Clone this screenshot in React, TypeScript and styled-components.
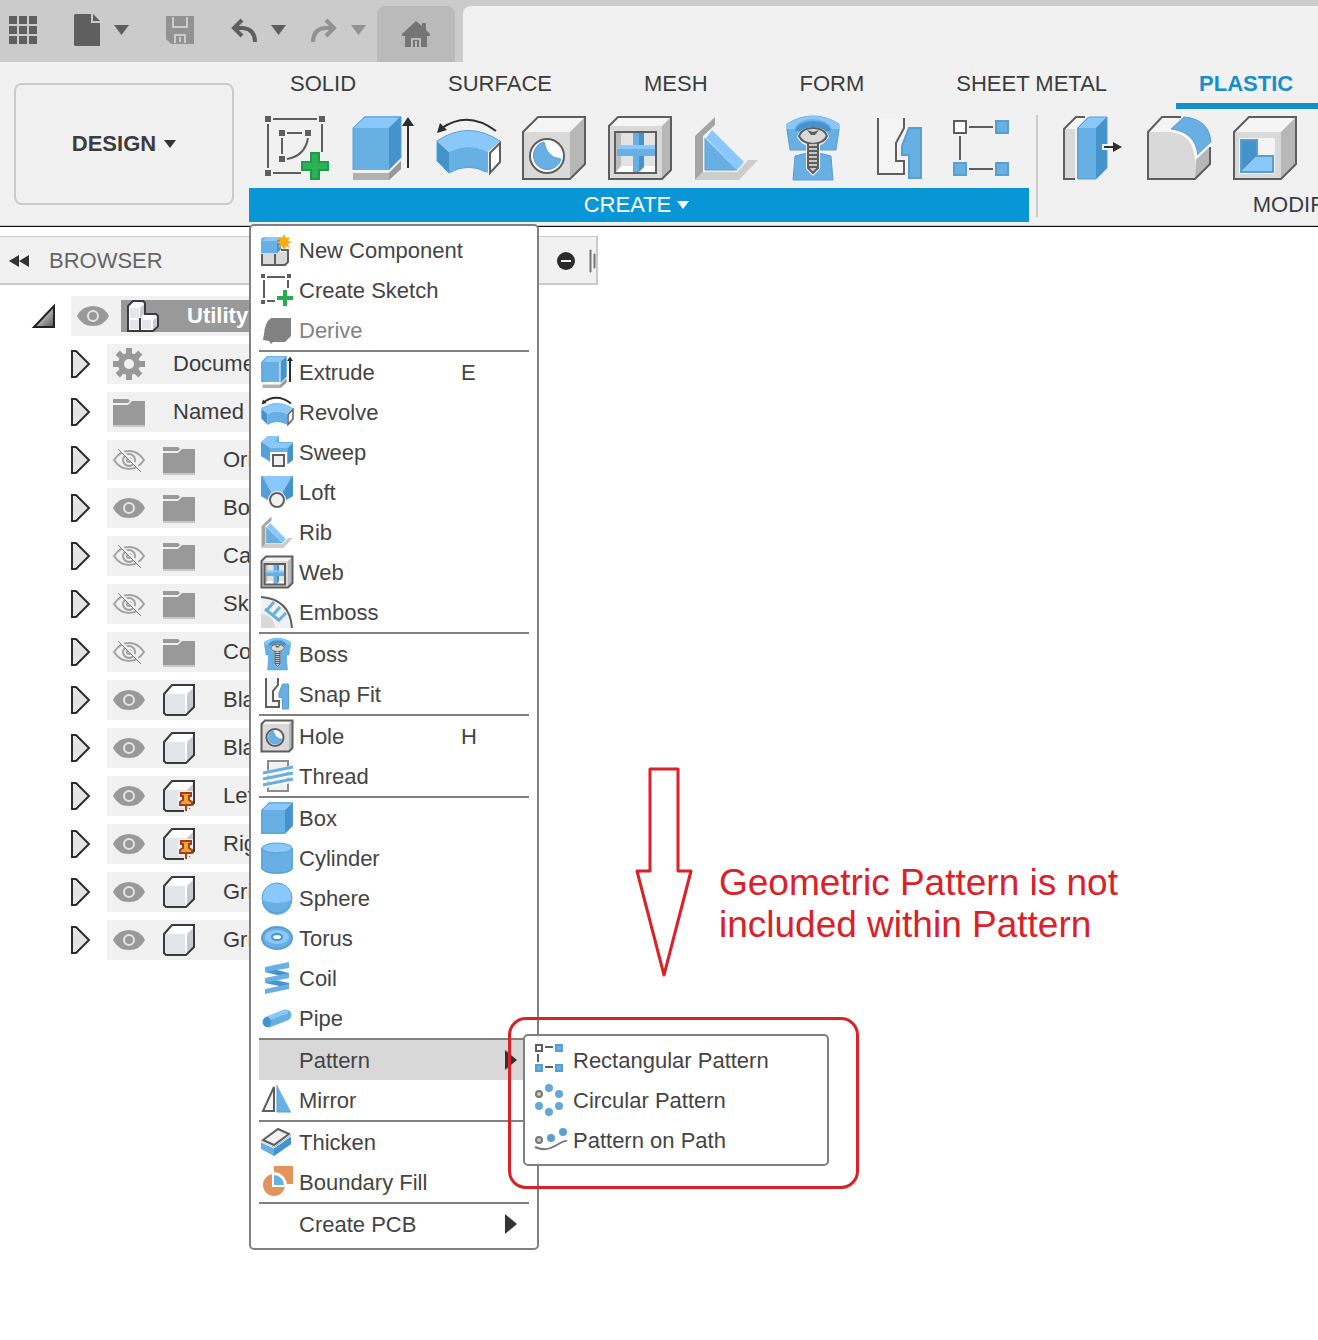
import React from "react";
import styled, { createGlobalStyle, css } from "styled-components";

/* ---------- palette ---------- */
const c = {
  face: "#68afe3",
  light: "#8ac8fb",
  dark: "#4593cb",
  edge: "#589fd1",
  line: "#5e5e5e",
  grey: "#d9d9d9",
  greyDark: "#b7b7b7",
  pale: "#f5f5f5",
  text: "#3c3c3c",
  accent: "#0896d7",
  note: "#dc2027",
};

const GlobalStyle = createGlobalStyle`
  *, *::before, *::after { box-sizing: border-box; }
  body {
    margin: 0;
    background: #fff;
    color: ${c.text};
    font: 22px/26px "Liberation Sans", Arial, sans-serif;
  }
  button {
    font: inherit;
    color: inherit;
    background: none;
    border: 0;
    padding: 0;
    margin: 0;
    cursor: pointer;
  }
`;

/* ---------- svg helpers ---------- */
const Svg = styled.svg<{ $w: number; $h?: number }>`
  display: block;
  flex: none;
  width: ${(p) => p.$w}px;
  height: ${(p) => p.$h ?? p.$w}px;
  overflow: visible;
`;

type IconProps = { small?: boolean };

/* Drawn on a 64 grid; shown at 64px in the ribbon and at 32px in menus. */
const Icon64 = ({ small, children }: React.PropsWithChildren<IconProps>) => (
  <Svg $w={small ? 32 : 64} viewBox="0 0 64 64" aria-hidden="true">
    {children}
  </Svg>
);
const Icon32 = ({ children }: React.PropsWithChildren) => (
  <Svg $w={32} viewBox="0 0 32 32" aria-hidden="true">
    {children}
  </Svg>
);

const Caret = ({ w = 12, h = 8, fill = "#333" }: { w?: number; h?: number; fill?: string }) => (
  <Svg $w={w} $h={h} viewBox="0 0 12 8" preserveAspectRatio="none" aria-hidden="true">
    <path d="M0 0H12L6 8Z" fill={fill} />
  </Svg>
);

/* ---------- ribbon icons ---------- */
const SketchIcon = () => (
  <Icon64>
    <g fill={c.line}>
      <path d="M1 0h6v6H1zM55 0h6v6h-6zM1 54h6v6H1zM15 14h6v6h-6zM41 14h6v6h-6zM15 40h6v6h-6z" />
    </g>
    <path
      d="M9 3H53M4 8V52M58 8V36M9 57H37M23 17H38M18 22V38M44 22Q41 40 23 43"
      stroke={c.line}
      strokeWidth="2"
      fill="none"
    />
    <path d="M47 37h8v9h9v8h-9v9h-8v-9h-9v-8h9z" fill="#2bb257" stroke="#1f9a48" strokeWidth="2" />
  </Icon64>
);

const ExtrudeIcon = ({ small }: IconProps) => (
  <Icon64 small={small}>
    <path d="M3 57H39L51 45V53L39 64H3Z" fill="#b1b1b1" />
    <path d="M39 57L51 45V53L39 64Z" fill="#989898" />
    <path d={small ? "M0 12L12 0H47L37 12V52H0Z" : "M3 12L15 0H51L40 12V54H3Z"} fill={c.face} />
    <path d="M3 12L15 0H51L39 12Z" fill={c.light} />
    <path d="M39 12L51 0V42L39 54Z" fill={c.dark} />
    <path d="M3 54V12L15 1H51V42" stroke={c.edge} fill="none" />
    <path d="M58 8V52" stroke="#2e2e2e" strokeWidth={small ? 4 : 2} />
    <path d="M58 1L64 10H52Z" fill="#2e2e2e" />
  </Icon64>
);

const RevolveIcon = ({ small }: IconProps) => (
  <Icon64 small={small}>
    <path d="M60 15Q32 -6 6 12" stroke="#2e2e2e" strokeWidth={small ? 4 : 2} fill="none" />
    <path d="M1 17L4 7L11 14Z" fill="#2e2e2e" />
    <path d="M1 25L13 36V57L1 45Z" fill={c.dark} />
    <path d="M1 25Q32 4 64 25L52 36Q32 26 13 36Z" fill={c.light} />
    <path d="M13 36Q32 26 52 36V57Q32 46 13 57Z" fill={c.face} />
    <path d="M1 25V45L13 57Q32 46 50 56M1 25Q32 4 64 25" stroke={c.edge} fill="none" />
    <path d="M54 37L64 27V46L54 57Z" fill="#fff" stroke={c.line} strokeWidth={small ? 3 : 2} />
  </Icon64>
);

const GreyBox = ({ d, w }: { d: number; w: number }) => (
  <>
    <path d={`M1 ${d}L${d} 1H63L${64 - d} ${d}Z`} fill={c.pale} />
    <path d={`M${64 - d} ${d}L63 1V${64 - d}L${64 - d} 63Z`} fill={c.greyDark} />
    <path d={`M1 ${d}H${64 - d}V63H1Z`} fill={c.grey} />
    <path
      d={`M1 ${d}L${d} 1H63V${64 - d}L${64 - d} 63H1Z`}
      fill="none"
      stroke={c.line}
      strokeWidth={w}
    />
  </>
);

const HoleIcon = ({ small }: IconProps) => (
  <Icon64 small={small}>
    <GreyBox d={small ? 8 : 16} w={small ? 4 : 2} />
    <g transform={small ? "translate(3 -5)" : undefined}>
      <circle cx="25" cy="40" r="17" fill="#fff" stroke={c.line} strokeWidth={small ? 4 : 2} />
      <path
        d="M22 26A14 14 0 1 0 39 43Q25 42 22 26Z"
        fill={c.face}
        stroke={c.edge}
        strokeWidth="1"
      />
    </g>
  </Icon64>
);

const WebIcon = ({ small }: IconProps) => (
  <Icon64 small={small}>
    <GreyBox d={10} w={small ? 4 : 2} />
    <path d="M7 16H48V57H7Z" fill="#e3e3e3" />
    <path d="M7 16H13V51L7 57Z" fill="#bcbcbc" />
    <path d="M7 57L13 50H48V57Z" fill="#fff" />
    <path d="M25 16H31V56H25Z" fill={c.face} />
    <path d="M31 16H36V51L31 56Z" fill={c.dark} />
    <path d="M9 33L13 29H48V33Z" fill={c.light} />
    <path d="M9 33H48V40H9Z" fill={c.face} />
    <path d="M7 16H48V57H7Z" fill="none" stroke={c.line} strokeWidth={small ? 4 : 2} />
  </Icon64>
);

const RibIcon = ({ small }: IconProps) => (
  <Icon64 small={small}>
    <path d="M1 20L21 1V9L9 20V56L1 64Z" fill="#a5a5a5" />
    <path d="M1 64L9 56H43L54 44H64L45 64Z" fill="#cdcdcd" />
    <path d="M12 22L18 14L50 46L43 54Z" fill={c.light} />
    <path d="M11 22L43 54H11Z" fill={c.face} />
    <path d="M11 22V54H43" fill="none" stroke={c.edge} />
  </Icon64>
);

const BossIcon = ({ small }: IconProps) => (
  <Icon64 small={small}>
    <path d="M7 8Q33 -8 59 8V14L56 34H10L7 14Z" fill={c.face} stroke={c.edge} />
    <path d="M7 8Q33 -8 59 8V13H52Q47 3 33 3Q19 3 14 13H7Z" fill={c.light} />
    <path d="M15 15Q17 6 33 5Q49 6 51 15Z" fill={c.dark} />
    <path d="M15 40Q33 34 51 40L53 64H13Z" fill={c.face} stroke={c.edge} />
    {small && <path d="M14 32H52V42H14Z" fill={c.face} />}
    <path
      d="M17 21Q20 11 33 11Q46 11 49 21Q44 28 40 29V53L33 60L26 53V29Q21 28 17 21Z"
      fill={small ? c.light : "#f3f3f3"}
    />
    <path
      d="M19 20Q22 12 33 12Q44 12 47 20Q44 27 33 28Q22 27 19 20Z"
      fill={c.grey}
      stroke={c.line}
      strokeWidth="2"
    />
    <path d="M27 14L33 16L39 14L35 19H31Z" fill={c.line} />
    <path d="M28 28H38V52L33 57L28 52Z" fill="#c5c5c5" />
    <path
      d="M28 31H38M28 35H38M28 39H38M28 43H38M28 47H38M28 51H38"
      stroke={c.line}
      strokeWidth="2"
    />
    <path d="M28 28V52L33 57L38 52V28" fill="none" stroke={c.line} strokeWidth="2" />
  </Icon64>
);

const SnapIcon = ({ small }: IconProps) => (
  <Icon64 small={small}>
    <path
      d={
        small
          ? "M10 0V58H36V46H24V26L34 14V0"
          : "M12 2V58H38V45H30V27L38 12V2"
      }
      fill={c.pale}
      stroke={c.line}
      strokeWidth={small ? 4 : 2}
    />
    <path d="M43 12H55V62H43V39H36V30Z" fill={c.face} stroke={c.edge} strokeWidth="2" />
  </Icon64>
);

const RectPatternIcon = () => (
  <Icon64>
    <path d="M2 5H14V17H2Z" fill="#fff" stroke={c.line} strokeWidth="2" />
    <path
      d="M44 5H56V17H44ZM2 47H14V59H2ZM44 47H56V59H44Z"
      fill={c.face}
      stroke={c.edge}
      strokeWidth="2"
    />
    <path d="M17 11H41M17 53H41M8 20V44" stroke={c.line} strokeWidth="2" />
  </Icon64>
);

const PressPullIcon = () => (
  <Icon64>
    <path d="M2 12L14 1H25L14 12V63H2Z" fill={c.pale} />
    <path d="M3 13H14V62H3Z" fill={c.grey} />
    <path d="M14 63H3V13L15 1H24" fill="none" stroke={c.line} strokeWidth="2" />
    <path d="M16 12L27 1H46V52L35 63H16Z" fill={c.face} />
    <path d="M16 12L27 1H46L35 12Z" fill={c.light} />
    <path d="M35 12L46 1V52L35 63Z" fill={c.dark} />
    <path d="M17 12L28 1H46V52L35 63H17Z" fill="none" stroke={c.edge} strokeWidth="1" />
    <path d="M41 28H52V34H41Z" fill="#f1f1f1" />
    <path d="M43 31H54" stroke="#2e2e2e" strokeWidth="2" />
    <path d="M52 26L61 31L52 36Z" fill="#2e2e2e" />
  </Icon64>
);

const FilletIcon = () => (
  <Icon64>
    <path d="M1 16L15 1H36L24 15Z" fill={c.pale} />
    <path d="M49 43L63 30V48L48 63Z" fill={c.greyDark} />
    <path d="M1 16H24Q46 18 48 43V63H1Z" fill={c.grey} />
    <path d="M34 1H15L1 16V63H48L63 48V31" fill="none" stroke={c.line} strokeWidth="2" />
    <path d="M24 13L37 1Q62 3 64 26L51 40Q49 16 24 13Z" fill={c.face} stroke={c.edge} />
    <path d="M22 15Q47 16 49 42L64 28" fill="none" stroke="#fff" strokeWidth="2" />
  </Icon64>
);

const ShellIcon = () => (
  <Icon64>
    <GreyBox d={16} w={2} />
    <path d="M6 22H42V58H6Z" fill="#f4f4f4" />
    <path d="M8 24H24V40L8 56Z" fill={c.dark} />
    <path d="M24 40H40V56H8Z" fill={c.light} />
    <path d="M8 24H24V40H40V56H8Z" fill="none" stroke={c.edge} strokeWidth="2" />
  </Icon64>
);

/* ---------- menu icons ---------- */
const NewComponentIcon = () => (
  <Icon32>
    <path d="M1 18H14V31H1ZM14 18H24L27 15V28L24 31H14Z" fill={c.grey} />
    <path d="M1 20V31H24L27 28V16H20M14 20V31" fill="none" stroke={c.line} strokeWidth="2" />
    <path d="M0 6Q0 3 5 3H20V15L16 19H0Z" fill={c.face} />
    <path d="M1 7L5 3H20L16 7Z" fill={c.light} />
    <path d="M16 7L20 3V15L16 19Z" fill={c.dark} />
    <path
      d="M23 0L25 4L29 3L27 7L31 8L27 10L29 14L25 12L23 16L21 12L17 14L19 10L15 8L19 7L17 3L21 4Z"
      fill="#fbab12"
    />
  </Icon32>
);
const SmallSketchIcon = () => (
  <Icon32>
    <path d="M0 0h4v4H0zM26 0h4v4h-4zM0 26h4v4H0z" fill={c.line} />
    <path d="M6 3H24M3 6V24M27 6V14M6 27H14" stroke={c.line} strokeWidth="2" />
    <path d="M22 16h4v6h6v4h-6v6h-4v-6h-6v-4h6z" fill="#27ad50" />
  </Icon32>
);
const DeriveIcon = () => (
  <Icon32>
    <path d="M10 4H30V22L24 28H12L10 30L8 27L2 26L3 20Q4 8 10 4Z" fill="#828282" />
  </Icon32>
);
const SweepIcon = () => (
  <Icon32>
    <path d="M0 6L7 0H18V6H32V24L26 28H12L0 20Z" fill={c.face} />
    <path d="M0 6L7 0H18L14 5L18 7H32L27 12H9Z" fill={c.light} />
    <path d="M27 12L32 7V24L27 28Z" fill={c.dark} />
    <path d="M0 6L9 12V24L0 20Z" fill="#56a1d8" />
    <path d="M9 16H26V32H9Z" fill="#fff" />
    <path d="M12 19H23V30H12Z" fill="#f1f1f1" stroke={c.line} strokeWidth="2" />
  </Icon32>
);
const LoftIcon = () => (
  <Icon32>
    <path d="M0 0H32V20L25 24L16 14L7 24L0 20Z" fill={c.face} />
    <path d="M2 0H30L22 17H10Z" fill={c.light} />
    <path d="M32 0V20L25 24L22 16Z" fill={c.dark} />
    <path d="M0 0V20L7 24L10 16Z" fill="#549fd6" />
    <circle cx="16" cy="24" r="9" fill="#fff" />
    <circle cx="16" cy="24" r="7" fill="#f1f1f1" stroke={c.line} strokeWidth="2" />
  </Icon32>
);
const EmbossIcon = () => (
  <Icon32>
    <path d="M0 1Q29 3 31 32H0Z" fill="#f1f1f1" />
    <path d="M0 18Q13 19 14 32H0Z" fill={c.grey} />
    <path d="M0 1Q29 3 31 32" fill="none" stroke={c.line} strokeWidth="2" />
    <path d="M4 13L19 25M6 14L13 6M12 19L19 11M18 24L25 17" stroke={c.face} strokeWidth="3" />
  </Icon32>
);
const ThreadIcon = () => (
  <Icon32>
    <path d="M7 1H27V31H7Z" fill="#f1f1f1" stroke="#8b8b8b" strokeWidth="2" />
    <path
      d="M2 14L32 8M2 20L32 14M2 26L32 20"
      stroke="#fff"
      strokeWidth="5"
    />
    <path d="M2 13L32 7M2 19L32 13M2 25L32 19" stroke={c.face} strokeWidth="3" />
  </Icon32>
);
const BoxIcon = () => (
  <Icon32>
    <path d="M0 8L8 0H32L24 8Z" fill={c.light} />
    <path d="M24 8L32 0V24L24 32Z" fill={c.dark} />
    <path d="M0 8H24V32H0Z" fill={c.face} />
    <path d="M1 8L8 1H31V24L24 31H1Z" fill="none" stroke={c.edge} />
  </Icon32>
);
const CylinderIcon = () => (
  <Icon32>
    <path d="M0 6V27Q4 32 16 32Q28 32 32 27V6Z" fill={c.face} />
    <ellipse cx="16" cy="6" rx="15" ry="5" fill={c.light} stroke={c.edge} />
    <path d="M1 6V27Q5 31 16 31Q27 31 31 27V6" fill="none" stroke={c.edge} />
  </Icon32>
);
const SphereIcon = () => (
  <Icon32>
    <circle cx="16" cy="16" r="15" fill={c.light} />
    <path d="M1 18A15 15 0 0 0 31 18Q16 24 1 18Z" fill={c.face} />
    <circle cx="16" cy="16" r="15" fill="none" stroke={c.edge} />
  </Icon32>
);
const TorusIcon = () => (
  <Icon32>
    <ellipse cx="16" cy="16" rx="15" ry="11" fill={c.face} stroke={c.edge} strokeWidth="2" />
    <ellipse cx="16" cy="15" rx="12" ry="7" fill={c.light} />
    <ellipse cx="16" cy="15" rx="5" ry="3" fill="#fff" stroke={c.dark} strokeWidth="2" />
  </Icon32>
);
const CoilIcon = () => (
  <Icon32>
    <path d="M4 5L28 11V16L4 10ZM4 16L28 21V26L4 21Z" fill={c.dark} />
    <path d="M4 5L28 0V6L4 10ZM4 16L28 11V16L4 21ZM4 27L28 22V27L4 32Z" fill={c.face} />
  </Icon32>
);
const PipeIcon = () => (
  <Icon32>
    <path d="M7 20L25 13" stroke={c.face} strokeWidth="11" strokeLinecap="round" />
    <path d="M8 16L25 10" stroke={c.light} strokeWidth="4" strokeLinecap="round" />
    <ellipse cx="6" cy="20" rx="4" ry="5" fill={c.dark} />
  </Icon32>
);
const MirrorIcon = () => (
  <Icon32>
    <path d="M2 27L13 3V27Z" fill={c.pale} stroke={c.line} strokeWidth="2" />
    <path d="M16 1L30 28H16Z" fill={c.face} />
    <path d="M16 1V28H30" fill="none" stroke={c.edge} />
  </Icon32>
);
const ThickenIcon = () => (
  <Icon32>
    <path d="M0 15L13 21L30 9V18L13 30L0 23Z" fill={c.face} />
    <path d="M13 21L30 9V18L13 30Z" fill={c.dark} />
    <path d="M2 14L17 3L28 8L13 19Z" fill="#f1f1f1" stroke={c.line} strokeWidth="2" />
    <path d="M0 16L13 22L30 10" fill="none" stroke="#fff" strokeWidth="1" />
  </Icon32>
);
const BoundaryIcon = () => (
  <Icon32>
    <path d="M13 0H32V18H13Z" fill="#e3935c" />
    <circle cx="13" cy="19" r="11" fill="#e3935c" />
    <path d="M11 6A14 14 0 0 1 26 21H11Z" fill="#fff" />
    <path d="M13 9A10 10 0 0 1 23 19H13Z" fill={c.face} />
  </Icon32>
);
const SmallRectIcon = () => (
  <Icon32>
    <path d="M1 1H7V7H1Z" fill="#fff" stroke={c.line} strokeWidth="2" />
    <path d="M21 1H27V7H21ZM1 21H7V27H1ZM21 21H27V27H21Z" fill={c.face} stroke={c.edge} strokeWidth="2" />
    <path d="M10 3H18M10 23H18M3 10V18" stroke={c.line} strokeWidth="2" />
  </Icon32>
);
const CircularIcon = () => (
  <Icon32>
    <circle cx="4" cy="10" r="3" fill="#c9c9c9" stroke="#777" strokeWidth="2" />
    <g fill="#64a8d8">
      <circle cx="14" cy="4" r="4" />
      <circle cx="24" cy="10" r="4" />
      <circle cx="24" cy="22" r="4" />
      <circle cx="14" cy="28" r="4" />
      <circle cx="4" cy="22" r="4" />
    </g>
  </Icon32>
);
const PathIcon = () => (
  <Icon32>
    <circle cx="4" cy="16" r="3" fill="#c9c9c9" stroke="#777" strokeWidth="2" />
    <circle cx="16" cy="14" r="4" fill="#5b9fd2" />
    <circle cx="28" cy="8" r="4" fill="#5b9fd2" />
    <path d="M0 23Q10 28 20 22T32 17" fill="none" stroke="#777" strokeWidth="2" />
  </Icon32>
);

/* ---------- browser tree icons ---------- */
const EyeIcon = () => (
  <Icon32>
    <path d="M0 16Q5 6 16 6Q27 6 32 16Q27 26 16 26Q5 26 0 16Z" fill="#999" />
    <circle cx="16" cy="16" r="5" fill="#999" stroke="#e4e4e4" strokeWidth="2" />
  </Icon32>
);
const EyeOffIcon = () => (
  <Icon32>
    <g fill="none" stroke="#a3a3a3" strokeWidth="2">
      <path d="M1 16Q7 7 16 7Q25 7 31 16Q25 25 16 25Q7 25 1 16Z" />
      <circle cx="16" cy="16" r="6" />
      <circle cx="16" cy="16" r="2" />
    </g>
    <path d="M6 4L29 27" stroke="#f1f1f1" strokeWidth="2" />
    <path d="M5 5L28 28" stroke="#888" strokeWidth="1" />
  </Icon32>
);
const GearIcon = () => (
  <Icon32>
    {[0, 45, 90, 135].map((a) => (
      <path key={a} d="M13 0H19V32H13Z" fill="#999" transform={`rotate(${a} 16 16)`} />
    ))}
    <circle cx="16" cy="16" r="11" fill="#999" />
    <circle cx="16" cy="16" r="5" fill="#f1f1f1" />
  </Icon32>
);
const FolderIcon = () => (
  <Icon32>
    <path d="M0 3H15L17 5L15 7H0Z" fill="#999" />
    <path d="M0 9H15L19 5H32V29H0Z" fill="#999" />
    <path d="M0 29H32V31H0Z" fill="#c9c9c9" />
  </Icon32>
);
const Cube = () => (
  <>
    <path d="M1 9L9 1H31V23L23 31H1Z" fill="#fff" />
    <path d="M2 10H22V30H2Z" fill="#e3e4e9" />
    <path d="M24 10L30 4V23L24 29Z" fill="#c8cad3" />
    <path d="M1 10L9 1H31V23L23 31H3L1 29Z" fill="none" stroke="#3a3a42" strokeWidth="2" />
  </>
);
const BodyIcon = () => (
  <Icon32>
    <Cube />
  </Icon32>
);
const PinnedIcon = () => (
  <Icon32>
    <Cube />
    <path d="M15 11H30V28H26V32H21V28H15Z" fill="#f1f1f1" />
    <path d="M18 13H28V16H26V20L29 22V25H17V22L20 20V16H18Z" fill="#f7a03c" stroke="#9e4213" strokeWidth="2" />
    <path d="M23 25V31" stroke="#9e4213" strokeWidth="2" />
  </Icon32>
);
const AssemblyIcon = () => (
  <Icon32>
    <path d="M1 6L6 1H16L18 3V14H29L31 16V26L26 31H1Z" fill="#fff" stroke="#3a3a42" strokeWidth="2" />
    <path d="M3 8H12V18H3ZM3 20H12V29H3ZM15 20H24V29H15Z" fill="#e3e5ec" />
    <path d="M13 8L17 4V14L13 18ZM26 20L30 17V26L26 29Z" fill="#c8cad3" />
    <path d="M13 18V31" stroke="#3a3a42" strokeWidth="2" />
  </Icon32>
);

/* ---------- page ---------- */
const Page = styled.div`
  position: relative;
  min-height: 100vh;
  overflow: hidden;
  background: #fff;
`;

/* application bar */
const AppBar = styled.header`
  display: flex;
  align-items: flex-end;
  height: 62px;
  padding-left: 9px;
  background: #cbcbcb;
`;
const QuickTools = styled.div`
  display: flex;
  align-items: center;
  gap: 37px;
  height: 60px;
  align-self: flex-start;
`;
const History = styled.div`
  display: flex;
  gap: 25px;
`;
const ToolButton = styled.button<{ $muted?: boolean }>`
  display: flex;
  align-items: center;
  gap: 14px;
  color: ${(p) => (p.$muted ? "#929292" : "#5f5f5f")};
`;
const HomeTab = styled.button`
  display: flex;
  align-items: center;
  justify-content: center;
  width: 78px;
  height: 56px;
  margin: 0 8px 0 11px;
  border-radius: 8px 8px 0 0;
  background: #bababa;
  flex: none;
`;
const DocumentTab = styled.div`
  flex: 1;
  height: 56px;
  border-radius: 8px 0 0 0;
  background: #f1f1f1;
`;

/* ribbon */
const Ribbon = styled.section`
  display: flex;
  padding-bottom: 4px;
  background: #f1f1f1;
  border-bottom: 1px solid #111;
  box-shadow: inset 0 -1px #c6c6c6;
`;
const Workspace = styled.button`
  display: flex;
  flex: none;
  align-items: center;
  justify-content: center;
  gap: 8px;
  width: 220px;
  height: 122px;
  margin: 21px 15px 0 14px;
  border: 2px solid #cbcbcb;
  border-radius: 8px;
  font-weight: bold;
`;
const RibbonMain = styled.div`
  flex: 1;
  min-width: 0;
`;
const Tabs = styled.nav`
  display: flex;
  gap: 46px;
  padding-left: 18px;
`;
const Tab = styled.button<{ $active?: boolean }>`
  flex: none;
  height: 47px;
  padding: 3px 23px 0;
  border-bottom: 6px solid transparent;
  white-space: nowrap;
  ${(p) =>
    p.$active &&
    css`
      font-weight: bold;
      color: #168fcb;
      border-color: #168fcb;
      flex: 1 0 auto;
      text-align: left;
    `}
`;
const Groups = styled.div`
  display: flex;
  align-items: flex-start;
`;
const Group = styled.div<{ $cells: number }>`
  position: relative;
  flex: none;
  min-width: ${(p) => p.$cells * 86 + 6}px;
`;
const Tools = styled.div`
  display: flex;
  gap: 22px;
  padding: 7px 13px 8px 15px;
`;
const GroupTitle = styled.button<{ $open?: boolean }>`
  display: flex;
  align-items: center;
  justify-content: center;
  gap: 6px;
  width: 100%;
  height: 34px;
  padding-right: 5px;
  background: ${(p) => (p.$open ? c.accent : "transparent")};
  color: ${(p) => (p.$open ? "#fff" : c.text)};
`;
const GroupRule = styled.div`
  flex: none;
  width: 2px;
  height: 102px;
  margin: 6px 8px 0 7px;
  background: #cbcbcb;
`;

/* menus */
const menuBox = css`
  position: absolute;
  padding: 4px 8px;
  background: #fff;
  border: 2px solid #808080;
  border-radius: 5px;
`;
const Menu = styled.div`
  ${menuBox}
  top: calc(100% + 2px);
  left: 0;
  z-index: 2;
  width: 290px;
`;
const SubMenu = styled.div`
  ${menuBox}
  top: -6px;
  left: calc(100% - 6px);
  width: 306px;
`;
const MenuRow = styled.div`
  position: relative;
`;
const MenuButton = styled.button<{ $active?: boolean }>`
  display: grid;
  grid-template-columns: 32px 1fr auto;
  align-items: center;
  gap: 6px;
  width: 100%;
  height: 40px;
  padding: 0 12px 0 2px;
  text-align: left;
  line-height: 28px;
  white-space: nowrap;
  color: #444;
  background: ${(p) => (p.$active ? "#d8d8d8" : "transparent")};
  &:disabled {
    color: #828282;
  }
`;
const MenuText = styled.span`
  padding-top: 2px;
`;
const Shortcut = styled(MenuText)`
  width: 56px;
`;
const Rule = styled.hr`
  height: 2px;
  margin: 0;
  border: 0;
  background: #808080;
`;
const Highlight = styled.div`
  position: absolute;
  inset: -19px -32px -25px -17px;
  border: 3px solid ${c.note};
  border-radius: 18px;
  pointer-events: none;
`;

/* browser */
const BrowserHead = styled.div`
  display: flex;
  align-items: center;
  gap: 20px;
  width: 598px;
  max-width: 100%;
  height: 49px;
  margin-top: 9px;
  padding: 1px 1px 0 9px;
  background: #f1f1f1;
  border: solid #c9c9c9;
  border-width: 1px 2px 2px 0;
`;
const BrowserTitle = styled.h2`
  flex: 1;
  margin: 0;
  font-size: 22px;
  font-weight: normal;
  color: #666;
`;
const HeadTools = styled.div`
  display: flex;
  align-items: center;
  gap: 15px;
`;
const Tree = styled.ul`
  display: flex;
  flex-direction: column;
  gap: 8px;
  width: 300px;
  margin: 0;
  padding: 11px 0 0 31px;
  list-style: none;
`;
const TreeItem = styled.li<{ $nested?: boolean }>`
  display: flex;
  align-items: center;
  gap: 15px;
  padding-left: ${(p) => (p.$nested ? 40 : 0)}px;
`;
const Expander = styled.button`
  flex: none;
  width: 25px;
`;
const ChildExpander = styled(Expander)`
  width: 21px;
`;
const TreeBody = styled.div<{ $wide?: boolean }>`
  display: flex;
  flex: 1;
  align-items: center;
  gap: ${(p) => (p.$wide ? 18 : 12)}px;
  height: 40px;
  padding-left: 6px;
  background: #f1f1f1;
  white-space: nowrap;
`;
const TreeLabel = styled.span`
  display: flex;
  align-items: center;
  gap: 28px;
`;
const RootLabel = styled(TreeLabel)`
  flex: 1;
  height: 32px;
  padding-left: 6px;
  background: #999;
  color: #fff;
  font-weight: bold;
`;

/* annotation over the canvas */
const Note = styled.aside`
  position: absolute;
  top: 767px;
  left: 635px;
  display: flex;
  gap: 26px;
  pointer-events: none;
`;
const NoteText = styled.p`
  margin: 0;
  padding-top: 95px;
  font-size: 37px;
  line-height: 42px;
  color: ${c.note};
`;

/* ---------- data ---------- */
type Entry =
  | "rule"
  | {
      label: string;
      icon?: React.ReactNode;
      shortcut?: string;
      disabled?: boolean;
      arrow?: boolean;
      sub?: Entry[];
    };

const patternMenu: Entry[] = [
  { label: "Rectangular Pattern", icon: <SmallRectIcon /> },
  { label: "Circular Pattern", icon: <CircularIcon /> },
  { label: "Pattern on Path", icon: <PathIcon /> },
];

const createMenu: Entry[] = [
  { label: "New Component", icon: <NewComponentIcon /> },
  { label: "Create Sketch", icon: <SmallSketchIcon /> },
  { label: "Derive", icon: <DeriveIcon />, disabled: true },
  "rule",
  { label: "Extrude", icon: <ExtrudeIcon small />, shortcut: "E" },
  { label: "Revolve", icon: <RevolveIcon small /> },
  { label: "Sweep", icon: <SweepIcon /> },
  { label: "Loft", icon: <LoftIcon /> },
  { label: "Rib", icon: <RibIcon small /> },
  { label: "Web", icon: <WebIcon small /> },
  { label: "Emboss", icon: <EmbossIcon /> },
  "rule",
  { label: "Boss", icon: <BossIcon small /> },
  { label: "Snap Fit", icon: <SnapIcon small /> },
  "rule",
  { label: "Hole", icon: <HoleIcon small />, shortcut: "H" },
  { label: "Thread", icon: <ThreadIcon /> },
  "rule",
  { label: "Box", icon: <BoxIcon /> },
  { label: "Cylinder", icon: <CylinderIcon /> },
  { label: "Sphere", icon: <SphereIcon /> },
  { label: "Torus", icon: <TorusIcon /> },
  { label: "Coil", icon: <CoilIcon /> },
  { label: "Pipe", icon: <PipeIcon /> },
  "rule",
  { label: "Pattern", arrow: true, sub: patternMenu },
  { label: "Mirror", icon: <MirrorIcon /> },
  "rule",
  { label: "Thicken", icon: <ThickenIcon /> },
  { label: "Boundary Fill", icon: <BoundaryIcon /> },
  "rule",
  { label: "Create PCB", arrow: true },
];

const createTools: [string, React.ReactNode][] = [
  ["Create Sketch", <SketchIcon />],
  ["Extrude", <ExtrudeIcon />],
  ["Revolve", <RevolveIcon />],
  ["Hole", <HoleIcon />],
  ["Web", <WebIcon />],
  ["Rib", <RibIcon />],
  ["Boss", <BossIcon />],
  ["Snap Fit", <SnapIcon />],
  ["Rectangular Pattern", <RectPatternIcon />],
];
const modifyTools: [string, React.ReactNode][] = [
  ["Press Pull", <PressPullIcon />],
  ["Fillet", <FilletIcon />],
  ["Shell", <ShellIcon />],
];

const tabs = ["SOLID", "SURFACE", "MESH", "FORM", "SHEET METAL", "PLASTIC"];

type Node = { label: string; eye?: "on" | "off"; icon: "gear" | "folder" | "body" | "pinned" };
const nodes: Node[] = [
  { label: "Docume", icon: "gear" },
  { label: "Named", icon: "folder" },
  { label: "Ori", eye: "off", icon: "folder" },
  { label: "Bo", eye: "on", icon: "folder" },
  { label: "Ca", eye: "off", icon: "folder" },
  { label: "Sk", eye: "off", icon: "folder" },
  { label: "Co", eye: "off", icon: "folder" },
  { label: "Bla", eye: "on", icon: "body" },
  { label: "Bla", eye: "on", icon: "body" },
  { label: "Lef", eye: "on", icon: "pinned" },
  { label: "Rig", eye: "on", icon: "pinned" },
  { label: "Gri", eye: "on", icon: "body" },
  { label: "Gri", eye: "on", icon: "body" },
];
const nodeIcons = {
  gear: <GearIcon />,
  folder: <FolderIcon />,
  body: <BodyIcon />,
  pinned: <PinnedIcon />,
};

/* ---------- components ---------- */
const MenuEntries = ({ entries }: { entries: Entry[] }) => (
  <>
    {entries.map((e, i) =>
      e === "rule" ? (
        <Rule key={i} />
      ) : (
        <MenuRow key={i}>
          <MenuButton role="menuitem" disabled={e.disabled} $active={!!e.sub}>
            {e.icon ?? <span />}
            <MenuText>{e.label}</MenuText>
            {e.shortcut && <Shortcut>{e.shortcut}</Shortcut>}
            {e.arrow && (
              <Svg $w={12} $h={20} viewBox="0 0 12 20" aria-hidden="true">
                <path d="M0 0L12 10L0 20Z" fill="#333" />
              </Svg>
            )}
          </MenuButton>
          {e.sub && (
            <SubMenu role="menu" aria-label={e.label}>
              <MenuEntries entries={e.sub} />
              <Highlight />
            </SubMenu>
          )}
        </MenuRow>
      )
    )}
  </>
);

const ToolRow = ({ tools }: { tools: [string, React.ReactNode][] }) => (
  <Tools>
    {tools.map(([name, icon]) => (
      <button key={name} aria-label={name}>
        {icon}
      </button>
    ))}
  </Tools>
);

const UndoShape = ({ flip }: { flip?: boolean }) => (
  <Svg $w={26} $h={24} viewBox="0 0 26 24" aria-hidden="true">
    <g transform={flip ? "matrix(-1 0 0 1 26 0)" : undefined} fill="none" stroke="currentColor">
      <path d="M3 10H12Q24 11 24 24" strokeWidth="4" />
      <path d="M11 2L3 10L11 18" strokeWidth="4" />
    </g>
  </Svg>
);

export default function App() {
  return (
    <Page>
      <GlobalStyle />
      <AppBar>
        <QuickTools>
          <ToolButton aria-label="Data panel">
            <Svg $w={28} viewBox="0 0 28 28" aria-hidden="true">
              <path
                d="M0 0h8v8H0zM10 0h8v8h-8zM20 0h8v8h-8zM0 10h8v8H0zM10 10h8v8h-8zM20 10h8v8h-8zM0 20h8v8H0zM10 20h8v8h-8zM20 20h8v8h-8z"
                fill="currentColor"
              />
            </Svg>
          </ToolButton>
          <ToolButton aria-label="File">
            <Svg $w={26} $h={32} viewBox="0 0 26 32" aria-hidden="true">
              <path d="M0 1L1 0H17V9H26V32H1L0 31Z" fill="currentColor" />
              <path d="M19 0L26 7H19Z" fill="currentColor" />
            </Svg>
            <Caret w={15} h={10} fill="#5f5f5f" />
          </ToolButton>
          <ToolButton aria-label="Save" $muted>
            <Svg $w={28} viewBox="0 0 28 28" aria-hidden="true">
              <path d="M0 0H28V28H5L0 23Z" fill="currentColor" />
              <path d="M7 1V11H21V1M9 27V19H19V27" fill="none" stroke="#cbcbcb" strokeWidth="2" />
              <path d="M14 21V26" stroke="#cbcbcb" strokeWidth="2" />
            </Svg>
          </ToolButton>
          <History>
            <ToolButton aria-label="Undo">
              <UndoShape />
              <Caret w={15} h={10} fill="#5f5f5f" />
            </ToolButton>
            <ToolButton aria-label="Redo" $muted>
              <UndoShape flip />
              <Caret w={15} h={10} fill="#929292" />
            </ToolButton>
          </History>
        </QuickTools>
        <HomeTab aria-label="Home">
          <Svg $w={28} $h={26} viewBox="0 0 28 26" aria-hidden="true">
            <path d="M14 0L20 5V2H24V9L28 13V15H25V26H3V15H0V13Z" fill="#757575" />
            <path d="M10 26V18H18V26M14 20V26" fill="none" stroke="#bababa" strokeWidth="2" />
          </Svg>
        </HomeTab>
        <DocumentTab />
      </AppBar>

      <Ribbon>
        <Workspace>
          DESIGN
          <Caret />
        </Workspace>
        <RibbonMain>
          <Tabs>
            {tabs.map((t) => (
              <Tab key={t} $active={t === "PLASTIC"}>
                {t}
              </Tab>
            ))}
          </Tabs>
          <Groups>
            <Group $cells={9}>
              <ToolRow tools={createTools} />
              <GroupTitle $open aria-haspopup="menu" aria-expanded="true">
                CREATE
                <Caret fill="#fff" />
              </GroupTitle>
              <Menu role="menu" aria-label="Create">
                <MenuEntries entries={createMenu} />
              </Menu>
            </Group>
            <GroupRule />
            <Group $cells={6}>
              <ToolRow tools={modifyTools} />
              <GroupTitle>
                MODIFY
                <Caret />
              </GroupTitle>
            </Group>
          </Groups>
        </RibbonMain>
      </Ribbon>

      <BrowserHead>
        <button aria-label="Collapse browser">
          <Svg $w={20} $h={12} viewBox="0 0 20 12" aria-hidden="true">
            <path d="M0 6L10 0V12ZM10 6L20 0V12Z" fill="#333" />
          </Svg>
        </button>
        <BrowserTitle>BROWSER</BrowserTitle>
        <HeadTools>
          <button aria-label="Minimise browser">
            <Svg $w={18} viewBox="0 0 18 18" aria-hidden="true">
              <circle cx="9" cy="9" r="9" fill="#2b2b2b" />
              <path d="M4 9H14" stroke="#f1f1f1" strokeWidth="2" />
            </Svg>
          </button>
          <Svg $w={5} $h={22} viewBox="0 0 5 22" aria-hidden="true">
            <path d="M0 0H1V22H0ZM4 4H5V18H4Z" fill="#777" stroke="#777" />
          </Svg>
        </HeadTools>
      </BrowserHead>

      <Tree>
        <TreeItem>
          <Expander aria-label="Collapse Utility">
            <Svg $w={24} viewBox="0 0 24 24" aria-hidden="true">
              <defs>
                <linearGradient id="open" x1="0" y1="0" x2="1" y2="1">
                  <stop offset="0.4" stopColor="#c4c4c4" />
                  <stop offset="1" stopColor="#555" />
                </linearGradient>
              </defs>
              <path d="M3 23L23 2V23Z" fill="url(#open)" stroke="#222" strokeWidth="2" />
            </Svg>
          </Expander>
          <TreeBody>
            <button aria-label="Hide Utility">
              <EyeIcon />
            </button>
            <RootLabel>
              <AssemblyIcon />
              Utility
            </RootLabel>
          </TreeBody>
        </TreeItem>
        {nodes.map((n, i) => (
          <TreeItem key={i} $nested>
            <ChildExpander aria-label={`Expand ${n.label}`}>
              <Svg $w={20} $h={28} viewBox="0 0 20 28" aria-hidden="true">
                <path d="M1 1H5L18 14L5 27H1Z" fill="#e3e3e6" stroke="#2b2b2b" strokeWidth="2" />
              </Svg>
            </ChildExpander>
            <TreeBody $wide>
              {n.eye && (
                <button aria-label={`Toggle ${n.label}`}>
                  {n.eye === "on" ? <EyeIcon /> : <EyeOffIcon />}
                </button>
              )}
              <TreeLabel>
                {nodeIcons[n.icon]}
                {n.label}
              </TreeLabel>
            </TreeBody>
          </TreeItem>
        ))}
      </Tree>

      <Note>
        <Svg $w={58} $h={210} viewBox="0 0 58 210" aria-hidden="true">
          <path
            d="M15 2H43V104H56L29 208L2 104H15Z"
            fill="none"
            stroke={c.note}
            strokeWidth="3"
            strokeLinejoin="round"
          />
        </Svg>
        <NoteText>
          Geometric Pattern is not
          <br />
          included within Pattern
        </NoteText>
      </Note>
    </Page>
  );
}
